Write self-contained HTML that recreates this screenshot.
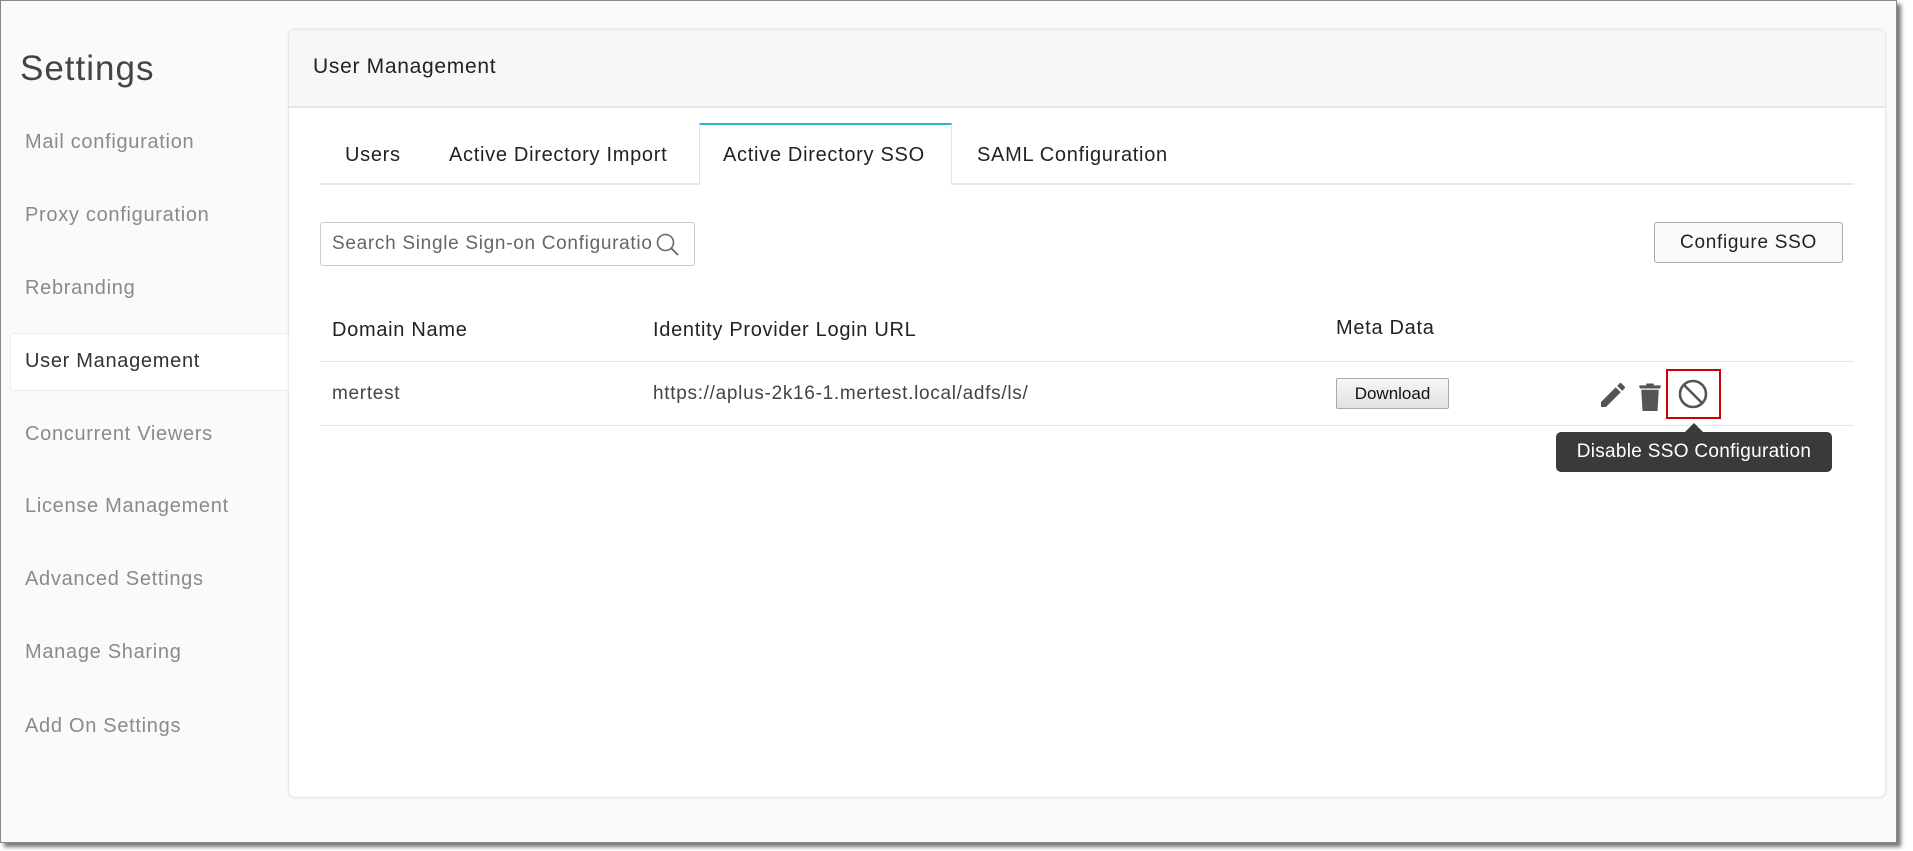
<!DOCTYPE html>
<html><head><meta charset="utf-8"><style>
*{box-sizing:border-box;margin:0;padding:0}
body{width:1913px;height:851px;background:#fff;font-family:"Liberation Sans",sans-serif;position:relative;overflow:hidden;letter-spacing:0.7px}
.frame{position:absolute;left:0;top:0;width:1897px;height:843px;background:#fafafa;border:1px solid #888;box-shadow:4px 4px 4px #777}
.a{position:absolute;white-space:nowrap}
.side{left:24px;font-size:20px;color:#8a8a8a}
.panel{position:absolute;left:289px;top:30px;width:1596px;height:767px;background:#fff;border-radius:6px;box-shadow:0 0 3px #ccc}
.hdr{position:absolute;left:0;top:0;width:100%;height:78px;background:#f7f7f7;border-bottom:2px solid #e6e6e6;border-radius:6px 6px 0 0}
.tab{font-size:20px;color:#222}
</style></head><body>
<div class="frame">
<div class="a" style="left:19px;top:48px;font-size:35px;color:#444;letter-spacing:1px">Settings</div>
<div class="a side" style="top:130px">Mail configuration</div>
<div class="a side" style="top:203px">Proxy configuration</div>
<div class="a side" style="top:276px">Rebranding</div>
<div class="a" style="left:9px;top:332px;width:280px;height:58px;background:#fff;border:1px solid #eee;border-right:none;border-radius:4px 0 0 4px"></div>
<div class="a side" style="top:349px;color:#333">User Management</div>
<div class="a side" style="top:422px">Concurrent Viewers</div>
<div class="a side" style="top:494px">License Management</div>
<div class="a side" style="top:567px">Advanced Settings</div>
<div class="a side" style="top:640px">Manage Sharing</div>
<div class="a side" style="top:714px">Add On Settings</div>
</div>
<div class="panel">
<div class="hdr"></div>
<div class="a" style="left:24px;top:25px;font-size:21px;color:#222">User Management</div>
<div class="a" style="left:31px;top:153px;width:1534px;height:2px;background:#e8e8e8"></div>
<div class="a" style="left:410px;top:93px;width:253px;height:62px;background:#fff;border:1px solid #e3e3e3;border-top:2px solid #2bb5d0;border-bottom:none"></div>
<div class="a tab" style="left:56px;top:114px">Users</div>
<div class="a tab" style="left:160px;top:114px">Active Directory Import</div>
<div class="a tab" style="left:434px;top:114px">Active Directory SSO</div>
<div class="a tab" style="left:688px;top:114px">SAML Configuration</div>
<div class="a" style="left:31px;top:192px;width:375px;height:44px;border:1px solid #ccc;border-radius:3px"></div>
<div class="a" style="left:43px;top:203px;font-size:19px;color:#666;width:320px;overflow:hidden">Search Single Sign-on Configuration</div>
<svg class="a" style="left:366px;top:202px" width="26" height="26" viewBox="0 0 26 26"><circle cx="10.5" cy="10.5" r="8" fill="none" stroke="#666" stroke-width="1.6"/><path d="M16.5 16.5L23 23" stroke="#666" stroke-width="1.8"/></svg>
<div class="a" style="left:1365px;top:192px;width:189px;height:41px;border:1px solid #aaa;border-radius:3px;background:#fafafa;font-size:19px;color:#222;text-align:center;line-height:39px">Configure SSO</div>
<div class="a" style="left:31px;top:331px;width:1534px;height:1px;background:#e6e6e6"></div>
<div class="a" style="left:31px;top:395px;width:1534px;height:1px;background:#e6e6e6"></div>
<div class="a" style="left:43px;top:289px;font-size:20px;color:#222">Domain Name</div>
<div class="a" style="left:364px;top:289px;font-size:20px;color:#222">Identity Provider Login URL</div>
<div class="a" style="left:1047px;top:287px;font-size:20px;color:#222">Meta Data</div>
<div class="a" style="left:43px;top:353px;font-size:19px;color:#444">mertest</div>
<div class="a" style="left:364px;top:353px;font-size:19px;color:#444">https://aplus-2k16-1.mertest.local/adfs/ls/</div>
<div class="a" style="left:1047px;top:348px;width:113px;height:31px;border:1px solid #aaa;border-radius:2px;background:linear-gradient(#f6f6f6,#e2e2e2);font-size:17px;color:#111;text-align:center;line-height:29px;letter-spacing:0">Download</div>
<svg class="a" style="left:1308px;top:349px" width="32" height="32" viewBox="0 0 24 24"><path d="M3 17.25V21h3.75L17.81 9.94l-3.75-3.75L3 17.25zM20.71 7.04a1 1 0 000-1.41l-2.34-2.34a1 1 0 00-1.41 0l-1.83 1.83 3.75 3.75 1.83-1.83z" fill="#555"/></svg>
<svg class="a" style="left:1346px;top:349px" width="30" height="34" viewBox="0 0 24 26"><path d="M4 6h16v1H4zM9 3h6v2H9zM3.5 4.5h17v2h-17zM5 8h14l-1 17H6z" fill="#555"/></svg>
<div class="a" style="left:1377px;top:339px;width:55px;height:50px;border:2px solid #c00"></div>
<svg class="a" style="left:1388px;top:348px" width="32" height="32" viewBox="0 0 32 32"><circle cx="16" cy="16" r="13" fill="none" stroke="#555" stroke-width="2.6"/><path d="M7 7L25 25" stroke="#555" stroke-width="2.6"/></svg>
<div class="a" style="left:1396px;top:393px;width:0;height:0;border-left:9px solid transparent;border-right:9px solid transparent;border-bottom:9px solid #3a3a3a"></div>
<div class="a" style="left:1267px;top:402px;width:276px;height:40px;background:#3a3a3a;border-radius:5px;color:#fff;font-size:19px;text-align:center;line-height:40px;letter-spacing:0.3px">Disable SSO Configuration</div>
</div>
</body></html>
